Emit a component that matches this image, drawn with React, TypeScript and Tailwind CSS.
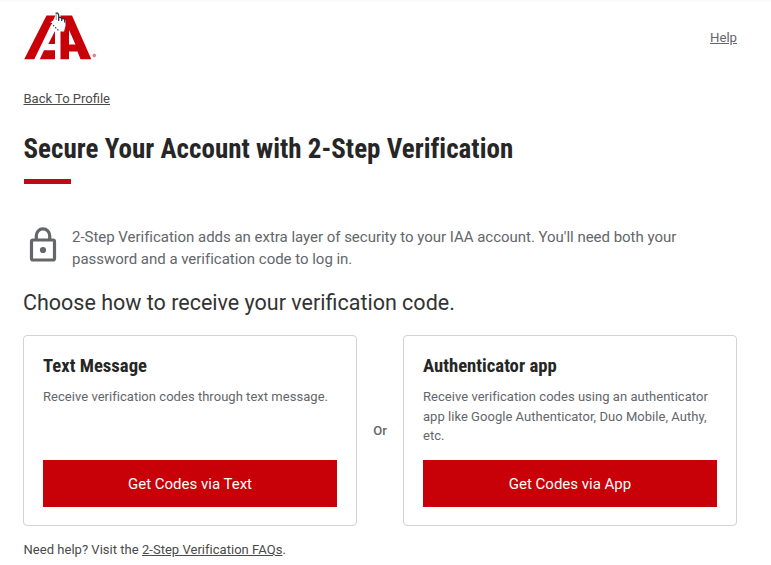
import type { ReactNode } from "react";

const heading =
  "font-['Roboto_Condensed','Roboto',sans-serif] [font-stretch:75%] font-bold text-[#262626] whitespace-nowrap";

function Logo() {
  return (
    <svg width="76" height="52" viewBox="0 0 76 52" aria-label="IAA">
      <g fill="#c80007">
        <path d="M23.500 5.500H32.500L11.300 49.300H1.200Z" />
        <path d="M32 21V34H25.300Z" />
        <path d="M21 40.300H32V49.300H16.800Z" />
        <path fillRule="evenodd" d="M37.500 5.500H49L68.300 49.300H57.500L54.500 41.500H46V49.300H37.500ZM46 20V34.500H52.500Z" />
      </g>
      <circle cx="71.300" cy="45.500" r="1.300" fill="#e58a8d" stroke="#d65a5e" strokeWidth="0.800" />
      <path
        d="M33 3L35.500 3.500L36.300 8L40 8.500L42.500 10V16L41 21.500H36L30 15L27.500 12.500L29.500 10.800L33.700 13Z"
        fill="#fff"
      />
      <path
        d="M32.500 3.200H34.700L35.700 5V11M36 7.200L38.700 8V11M38.700 8.300L41.700 9.200V12.500"
        fill="none"
        stroke="#1d2d40"
        strokeWidth="1.200"
      />
      <path d="M33.200 4V10" fill="none" stroke="#7d8791" strokeWidth="0.800" />
      <path d="M28 13L36 21" fill="none" stroke="#53303a" strokeWidth="1.200" strokeDasharray="1.500 1.500" />
    </svg>
  );
}

function Lock() {
  return (
    <svg width="28" height="36" viewBox="0 0 28 36" fill="none" stroke="#63666a" strokeWidth="3.200">
      <rect x="2.500" y="14" width="23" height="20" rx="1.500" />
      <path d="M7.300 14V9.500A6.700 6.700 0 0 1 20.700 9.500V14" />
      <circle cx="14" cy="24" r="3.100" fill="#63666a" stroke="none" />
    </svg>
  );
}

function Card({ title, action, children }: { title: string; action: string; children: ReactNode }) {
  return (
    <section className="flex h-[191px] w-[334px] flex-col rounded-[4px] border border-[#d3d3d3] px-[19px] pt-[18px] pb-[18px]">
      <h3 className={`${heading} text-[18.700px] leading-6`}>{title}</h3>
      <p className="mt-[9px] text-[13px] leading-[19.500px] tracking-[0.035px] whitespace-nowrap text-[#63666a]">
        {children}
      </p>
      <button className="mt-auto h-[47px] w-full bg-[#c80007] pt-px text-[15px] text-white">{action}</button>
    </section>
  );
}

export default function App() {
  return (
    <main className="flex h-[565px] w-[771px] flex-col overflow-hidden border-t-2 border-[#fafafa] bg-white pr-[34px] pl-[23px] font-['Roboto',sans-serif]">
      <header className="mt-[8px] flex h-[52px] justify-between">
        <Logo />
        <a className="mt-[18px] text-[13.200px] leading-5 text-[#63666a] underline">Help</a>
      </header>
      <a className="mt-[27px] pl-[0.500px] text-[13px] leading-5 text-[#4a4a4a] underline">Back To Profile</a>
      <h1 className={`${heading} mt-[22px] pl-[0.500px] text-[27px] leading-9 tracking-[0.020px]`}>
        Secure Your Account with 2-Step Verification
      </h1>
      <div className="mt-[12px] ml-[0.500px] h-[5px] w-[47px] bg-[#c00816]" />
      <div className="mt-[42px] flex h-[44px]">
        <div className="w-[49px] pl-[6px]">
          <Lock />
        </div>
        <p className="text-[15px] leading-[22px] tracking-[-0.020px] whitespace-nowrap text-[#63666a]">
          2-Step Verification adds an extra layer of security to your IAA account. You'll need both your
          <br />
          password and a verification code to log in.
        </p>
      </div>
      <h2 className="mt-[18px] text-[21.500px] leading-[30px] whitespace-nowrap text-[#333]">
        Choose how to receive your verification code.
      </h2>
      <div className="mt-[17px] flex items-center justify-between">
        <Card title="Text Message" action="Get Codes via Text">
          Receive verification codes through text message.
        </Card>
        <span className="text-[13px] font-medium text-[#63666a]">Or</span>
        <Card title="Authenticator app" action="Get Codes via App">
          Receive verification codes using an authenticator
          <br />
          app like Google Authenticator, Duo Mobile, Authy,
          <br />
          etc.
        </Card>
      </div>
      <p className="mt-[14px] pl-[0.500px] text-[13px] leading-5 tracking-[0.030px] text-[#4a4a4a]">
        Need help? Visit the <a className="underline">2-Step Verification FAQs</a>.
      </p>
    </main>
  );
}
